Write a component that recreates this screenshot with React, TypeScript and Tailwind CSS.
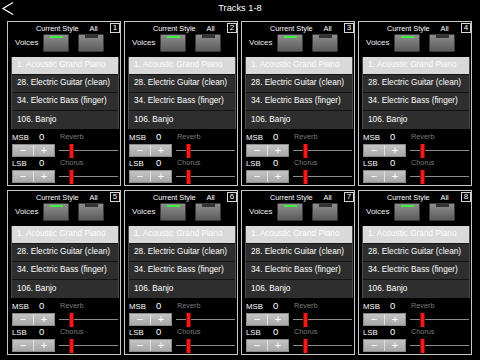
import React from "react";

const voices = [
  "1. Acoustic Grand Piano",
  "28. Electric Guitar (clean)",
  "34. Electric Bass (finger)",
  "106. Banjo",
];

function VoiceButton({ lit }: { lit: boolean }) {
  return (
    <div className="relative h-[18px] w-[26px] rounded-[1px] border border-[#3a3a3a] bg-gradient-to-b from-[#8e8e8e] to-[#5c5c5c]">
      <div
        className={
          lit
            ? "absolute left-[6px] top-[1px] h-[2px] w-[13px] bg-[#3cf03c]"
            : "absolute left-[6px] top-0 h-[3px] w-[13px] bg-[#333333]"
        }
      />
    </div>
  );
}

function Stepper() {
  return (
    <div className="flex h-[13px] w-[43px] border border-[#8a8a8a] bg-gradient-to-b from-[#c4c4c4] to-[#a8a8a8] text-white">
      <div className="flex flex-1 items-center justify-center border-r border-[#e0e0e0] text-[11px] leading-none">
        −
      </div>
      <div className="flex flex-1 items-center justify-center text-[11px] leading-none">
        +
      </div>
    </div>
  );
}

function Slider() {
  return (
    <div className="relative flex h-[13px] w-[59px] items-center">
      <div className="h-px w-full bg-[#8c8c8c]" />
      <div className="absolute left-[10px] top-0 h-[14px] w-[5px] border-x border-[#8a0000] bg-[#ee1b1b]" />
    </div>
  );
}

function ControlRow({ label, effect }: { label: string; effect: string }) {
  return (
    <>
      <div className="flex h-[13px] items-center">
        <div className="flex w-[47px] items-center pl-[4px]">
          <span className="w-[27px] text-[7.8px] text-white">{label}</span>
          <span className="text-[9.5px] text-white">0</span>
        </div>
        <span className="ml-[5px] text-[7.3px] text-[#7a7a7a]">{effect}</span>
      </div>
      <div className="flex h-[13px] items-center">
        <div className="w-[47px] pl-[4px]">
          <Stepper />
        </div>
        <div className="ml-[4px]">
          <Slider />
        </div>
      </div>
    </>
  );
}

function TrackPanel({ n }: { n: number }) {
  return (
    <div className="relative flex h-[165px] flex-col border border-[#c8c8c8]">
      <span className="absolute right-0 top-[1px] flex h-[10px] w-[10px] items-center justify-center border border-[#d8d8d8] text-[8px] leading-none text-white">
        {n}
      </span>
      <div className="flex h-[12px] pl-[28px] pt-[3px] text-[7.3px] leading-[8px] text-white">
        <span>Current Style</span>
        <span className="ml-[11px]">All</span>
      </div>
      <div className="flex h-[18px] items-center pl-[7px]">
        <span className="w-[28px] text-[8px] text-[#eeeeee]">Voices</span>
        <VoiceButton lit />
        <div className="ml-[9px]">
          <VoiceButton lit={false} />
        </div>
      </div>
      <div className="ml-[3px] mr-[1px] mt-[5px] flex flex-col divide-y divide-[#141414] border-x border-[#4a4a4a]">
        {voices.map((v, i) => (
          <div
            key={v}
            className={
              i === 0
                ? "flex h-[18px] items-center bg-[#d9d9d9] pl-[5px] text-[8.25px] text-white"
                : "flex h-[18px] items-center bg-[#2e2e2e] pl-[5px] text-[8.25px] text-white"
            }
          >
            {v}
          </div>
        ))}
      </div>
      <div className="mt-[2px] flex flex-col">
        <ControlRow label="MSB" effect="Reverb" />
        <ControlRow label="LSB" effect="Chorus" />
      </div>
    </div>
  );
}

export default function App() {
  return (
    <div
      className="h-[360px] w-[480px] overflow-hidden bg-black"
      style={{ fontFamily: '"Liberation Sans", Arial, sans-serif' }}
    >
      <div className="grid h-[21px] grid-cols-[40px_1fr_40px] items-start">
        <svg width="14" height="15" viewBox="0 0 14 15" className="ml-[1px] mt-[1px]">
          <polyline
            points="12,1.5 2,7.5 12,13.5"
            fill="none"
            stroke="#ffffff"
            strokeWidth="1.3"
          />
        </svg>
        <div className="pt-[2px] text-center text-[9.3px] leading-[12px] text-white">
          Tracks 1-8
        </div>
        <div />
      </div>
      <div className="grid grid-cols-[114px_114px_114px_114px] gap-x-[3px] gap-y-[4px] pl-[7px]">
        {[1, 2, 3, 4, 5, 6, 7, 8].map((n) => (
          <TrackPanel key={n} n={n} />
        ))}
      </div>
    </div>
  );
}
